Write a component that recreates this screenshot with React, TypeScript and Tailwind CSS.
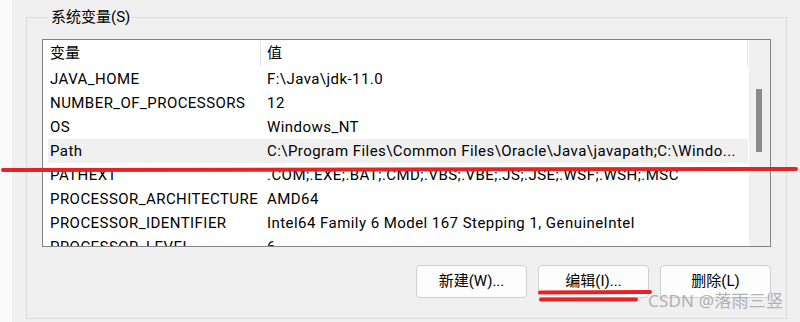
import React from "react";

const rows = [
  ["JAVA_HOME", "F:\\Java\\jdk-11.0"],
  ["NUMBER_OF_PROCESSORS", "12"],
  ["OS", "Windows_NT"],
  ["Path", "C:\\Program Files\\Common Files\\Oracle\\Java\\javapath;C:\\Windo..."],
  ["PATHEXT", ".COM;.EXE;.BAT;.CMD;.VBS;.VBE;.JS;.JSE;.WSF;.WSH;.MSC"],
  ["PROCESSOR_ARCHITECTURE", "AMD64"],
  ["PROCESSOR_IDENTIFIER", "Intel64 Family 6 Model 167 Stepping 1, GenuineIntel"],
  ["PROCESSOR_LEVEL", "6"],
];

function Btn({ label }: { label: string }) {
  return (
    <button className="w-[111px] h-[33px] rounded-[4px] border border-[#d0d0d0] bg-[#fdfdfd] text-[15px] text-black flex items-center justify-center">
      {label}
    </button>
  );
}

export default function App() {
  return (
    <div className="relative w-[800px] h-[322px] bg-[#f0f0f0] flex overflow-hidden font-['Roboto','Noto_Sans_CJK_SC',sans-serif] text-black">
      <div className="w-[12px] h-full bg-[#fafafa]" />

      {/* 系统变量 */}
      <fieldset className="mt-[7px] ml-[14px] w-[761px] h-[312px] border border-[#dcdcdc] px-[15px]">
        <legend className="ml-[7px] px-[2px] text-[15px] leading-[20px]">系统变量(S)</legend>

        <div className="mt-[12px] h-[208px] border border-[#838383] bg-white flex overflow-hidden">
          <div className="flex-1 pl-[5px] pr-[1px] overflow-hidden">
            <div className="h-[27px] flex items-center relative text-[15px]">
              <div className="w-[212px] pl-[2px]">变量</div>
              <div className="w-px h-[25px] bg-[#e5e5e5]" />
              <div className="flex-1 pl-[6px]">值</div>
              <div className="w-px h-[25px] bg-[#e5e5e5]" />
            </div>
            {rows.map(([k, v]) => (
              <div
                key={k}
                className={
                  "h-[24px] pt-[1px] flex items-center text-[15px] tracking-[0.45px] whitespace-nowrap " +
                  (k === "Path" ? "bg-[#f0f0f0]" : "")
                }
              >
                <div className="w-[217px] pl-[2px] shrink-0">{k}</div>
                <div className="pl-[2px] overflow-hidden">{v}</div>
              </div>
            ))}
          </div>
          {/* scrollbar */}
          <div className="w-[21px] h-full bg-[#f0f0f0] pt-[49px] pl-[7px]">
            <div className="w-[6px] h-[63px] bg-[#8a8a8a]" />
          </div>
        </div>

        <div className="mt-[18px] flex justify-end gap-[11px]">
          <Btn label="新建(W)..." />
          <Btn label="编辑(I)..." />
          <Btn label="删除(L)" />
        </div>
      </fieldset>

      <svg className="absolute inset-0 pointer-events-none" width="800" height="322">
        <line x1="3" y1="170" x2="796" y2="169" stroke="#e52226" strokeWidth="4" strokeLinecap="round" />
        <line x1="540" y1="292.5" x2="650" y2="292" stroke="#e52226" strokeWidth="4" strokeLinecap="round" />
        <line x1="541" y1="299.5" x2="636" y2="299.5" stroke="#e52226" strokeWidth="4" strokeLinecap="round" />
      </svg>

      <div className="absolute left-[648px] top-[290px] text-[17px] leading-[22px] text-[#a8a8a8]/90 tracking-[0.2px] font-['Noto_Sans','Noto_Sans_CJK_SC',sans-serif]">
        CSDN @落雨三竖
      </div>
    </div>
  );
}
